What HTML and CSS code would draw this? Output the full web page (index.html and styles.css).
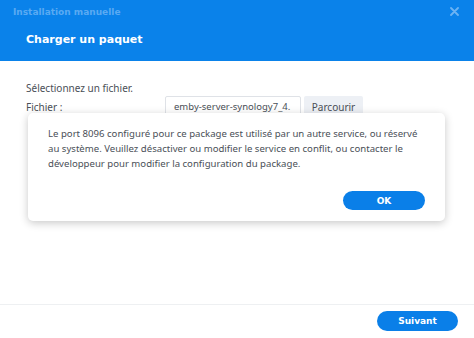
FILE: index.html
```html
<!DOCTYPE html>
<html lang="fr">
<head>
    <meta charset="UTF-8">
    <meta name="viewport" content="width=device-width, initial-scale=1.0">
    <title>Installation manuelle</title>
    <link rel="stylesheet" href="styles.css">
</head>
<body>

    <div id="window">
        <div id="header">
            <div class="title-bar">
                <span class="window-title">Installation manuelle</span>
                <span class="close-btn">
                    <svg width="9" height="9" viewBox="0 0 9 9">
                        <path d="M1 1 L8 8 M8 1 L1 8" stroke="currentColor" stroke-width="1.8" stroke-linecap="round"/>
                    </svg>
                </span>
            </div>
            <h1 class="step-title">Charger un paquet</h1>
        </div>

        <div id="content">
            <p class="hint">Sélectionnez un fichier.</p>
            <div class="field">
                <label class="field-label">Fichier :</label>
                <div class="file-input">emby-server-synology7_4.</div>
                <button class="browse-btn">Parcourir</button>
            </div>
        </div>

        <div id="footer">
            <button class="primary-btn next-btn">Suivant</button>
        </div>

        <div id="alert">
            <p class="alert-text">Le port 8096 configuré pour ce package est utilisé par un autre service, ou réservé au système. Veuillez désactiver ou modifier le service en conflit, ou contacter le développeur pour modifier la configuration du package.</p>
            <div class="alert-actions">
                <button class="primary-btn ok-btn">OK</button>
            </div>
        </div>
    </div>

</body>
</html>
```

FILE: styles.css
```css
body {
    margin: 0;
    background: white;
    font-family: 'Noto Sans', 'DejaVu Sans', sans-serif;
    color: #4a4f57;
}

#window {
    position: relative;
    width: 474px;
    height: 338px;
    display: flex;
    flex-direction: column;
    overflow: hidden;
}

#header {
    height: 61px;
    background-color: #0a82ea;
    box-sizing: border-box;
    padding: 4px 13px 0 13px;
}

.title-bar {
    display: flex;
    justify-content: space-between;
    align-items: center;
    height: 15px;
}

.window-title {
    font-family: 'DejaVu Sans', sans-serif;
    font-weight: bold;
    font-size: 9px;
    color: #5aaaf2;
}

.close-btn {
    color: #6cb3f3;
    display: flex;
    margin-right: 2px;
}

.step-title {
    margin: 13px 0 0 13px;
    font-family: 'DejaVu Sans', sans-serif;
    font-size: 11px;
    font-weight: bold;
    color: white;
    line-height: 16px;
}

#content {
    flex: 1;
    padding: 20px 26px 0 26px;
}

.hint {
    margin: 0;
    font-size: 10px;
    line-height: 14px;
}

.field {
    display: flex;
    align-items: center;
    margin-top: 1px;
}

.field-label {
    width: 139px;
    font-size: 10px;
}

.file-input {
    width: 136px;
    height: 21px;
    box-sizing: border-box;
    border: 1px solid #dfe2e7;
    border-radius: 2px;
    padding-left: 8px;
    font-size: 9.5px;
    line-height: 19px;
    white-space: nowrap;
}

.browse-btn {
    margin-left: 3px;
    width: 59px;
    height: 21px;
    border: none;
    border-radius: 2px;
    background-color: #edf0f5;
    font-family: 'Noto Sans', sans-serif;
    font-size: 10px;
    color: #4a4f57;
    padding: 0;
}

#footer {
    height: 33px;
    border-top: 1px solid #eef0f2;
    display: flex;
    justify-content: flex-end;
    align-items: center;
    padding-right: 16px;
}

.primary-btn {
    border: none;
    border-radius: 10px;
    background-color: #0a7fe8;
    color: white;
    font-family: 'DejaVu Sans', sans-serif;
    font-weight: bold;
    font-size: 9px;
    padding: 0;
}

.next-btn {
    width: 81px;
    height: 20px;
    margin-bottom: 2px;
}

/* message box over the form */
#alert {
    position: absolute;
    left: 28px;
    top: 113px;
    width: 417px;
    height: 108px;
    box-sizing: border-box;
    background: white;
    border-radius: 5px;
    box-shadow: 0 2px 8px rgba(0, 0, 0, 0.22);
    padding: 13px 20px 0 20px;
}

.alert-text {
    margin: 0;
    font-size: 9.6px;
    line-height: 15px;
}

.alert-actions {
    display: flex;
    justify-content: flex-end;
    margin-top: 20px;
}

.ok-btn {
    width: 82px;
    height: 19px;
}
```
